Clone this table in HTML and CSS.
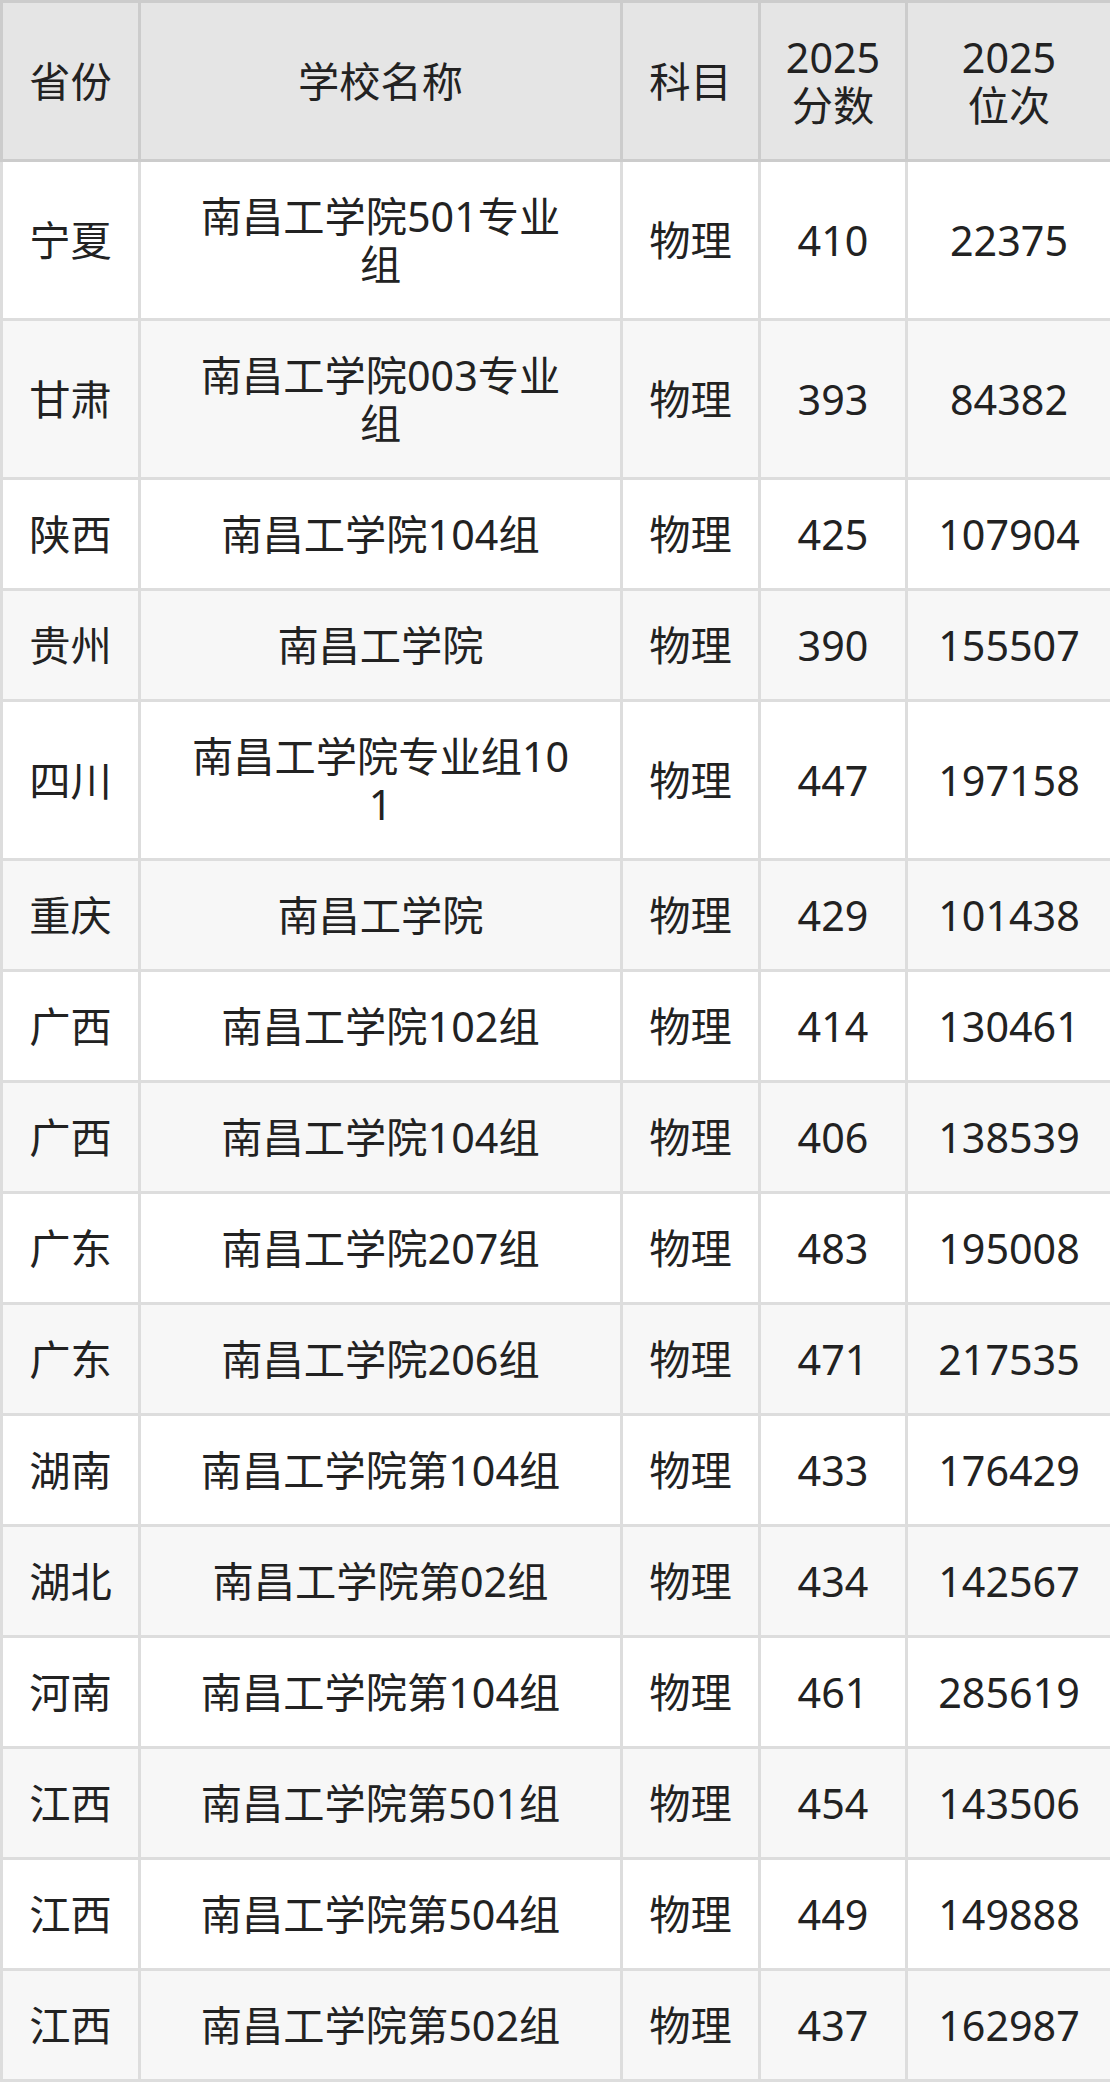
FILE: index.html
```html
<!DOCTYPE html>
<html lang="zh-CN">
<head>
<meta charset="utf-8">
<title>南昌工学院 2025 分数线</title>
<link rel="stylesheet" href="styles.css">
</head>
<body>
<table class="score-table">
  <colgroup>
    <col class="c-prov">
    <col class="c-name">
    <col class="c-subj">
    <col class="c-score">
    <col class="c-rank">
  </colgroup>
  <thead>
    <tr>
      <th>省份</th>
      <th class="name">学校名称</th>
      <th>科目</th>
      <th>2025<br>分数</th>
      <th>2025<br>位次</th>
    </tr>
  </thead>
  <tbody>
    <tr><td>宁夏</td><td class="name">南昌工学院501专业组</td><td>物理</td><td>410</td><td>22375</td></tr>
    <tr><td>甘肃</td><td class="name">南昌工学院003专业组</td><td>物理</td><td>393</td><td>84382</td></tr>
    <tr><td>陕西</td><td class="name">南昌工学院104组</td><td>物理</td><td>425</td><td>107904</td></tr>
    <tr><td>贵州</td><td class="name">南昌工学院</td><td>物理</td><td>390</td><td>155507</td></tr>
    <tr><td>四川</td><td class="name">南昌工学院专业组101</td><td>物理</td><td>447</td><td>197158</td></tr>
    <tr><td>重庆</td><td class="name">南昌工学院</td><td>物理</td><td>429</td><td>101438</td></tr>
    <tr><td>广西</td><td class="name">南昌工学院102组</td><td>物理</td><td>414</td><td>130461</td></tr>
    <tr><td>广西</td><td class="name">南昌工学院104组</td><td>物理</td><td>406</td><td>138539</td></tr>
    <tr><td>广东</td><td class="name">南昌工学院207组</td><td>物理</td><td>483</td><td>195008</td></tr>
    <tr><td>广东</td><td class="name">南昌工学院206组</td><td>物理</td><td>471</td><td>217535</td></tr>
    <tr><td>湖南</td><td class="name">南昌工学院第104组</td><td>物理</td><td>433</td><td>176429</td></tr>
    <tr><td>湖北</td><td class="name">南昌工学院第02组</td><td>物理</td><td>434</td><td>142567</td></tr>
    <tr><td>河南</td><td class="name">南昌工学院第104组</td><td>物理</td><td>461</td><td>285619</td></tr>
    <tr><td>江西</td><td class="name">南昌工学院第501组</td><td>物理</td><td>454</td><td>143506</td></tr>
    <tr><td>江西</td><td class="name">南昌工学院第504组</td><td>物理</td><td>449</td><td>149888</td></tr>
    <tr><td>江西</td><td class="name">南昌工学院第502组</td><td>物理</td><td>437</td><td>162987</td></tr>
  </tbody>
</table>
</body>
</html>
```

FILE: styles.css
```css
html, body {
  margin: 0;
  padding: 0;
  background: #ffffff;
}

.score-table {
  width: 1110px;
  border-collapse: collapse;
  table-layout: fixed;
  font-family: "Noto Sans", "Noto Sans CJK SC", sans-serif;
  font-size: 41.25px;
  line-height: 48px;
  color: #222222;
}

.c-prov { width: 138px; }
.c-name { width: 482px; }
.c-subj { width: 138px; }
.c-score { width: 147px; }
.c-rank { width: 205px; }

.score-table th,
.score-table td {
  padding: 30px 22px;
  text-align: center;
  vertical-align: middle;
  font-weight: 400;
}

.score-table th {
  background: #e5e5e5;
  border: 3px solid #cccccc;
}

.score-table td {
  border: 3px solid #dddddd;
}

.score-table .name {
  padding-left: 46px;
  padding-right: 46px;
  word-break: break-all;
}

.score-table tbody tr:nth-child(odd) td {
  background: #ffffff;
}

.score-table tbody tr:nth-child(even) td {
  background: #f7f7f7;
}
```
